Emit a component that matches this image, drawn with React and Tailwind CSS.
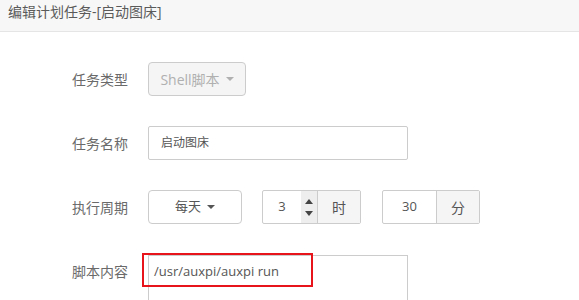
import React from 'react';

const font = { fontFamily: '"Open Sans", "Noto Sans CJK SC", sans-serif' };

const Caret = () => (
  <span className="inline-block ml-[6px] w-0 h-0 border-l-[4px] border-r-[4px] border-t-[4px] border-l-transparent border-r-transparent border-t-current align-middle" />
);

const Row = ({ label, children, className = '' }) => (
  <div className={`flex items-center ${className}`}>
    <label className="w-[148px] pr-[20px] text-right text-[14px] text-[#6a6a6a] shrink-0">{label}</label>
    {children}
  </div>
);

export default function App() {
  return (
    <div className="w-[579px] h-[300px] overflow-hidden bg-white" style={font}>
      <div className="h-[32px] bg-[#f7f7f7] border-b border-[#e5e5e5] pl-[8px] pt-[2px] text-[14px] leading-[20px] text-[#5a5a5a]">
        编辑计划任务-[启动图床]
      </div>

      <div className="pt-[30px]">
        <Row label="任务类型" className="mb-[30px]">
          <button
            disabled
            className="h-[34px] w-[98px] rounded-[4px] border border-[#ccc] bg-[#f5f5f5] text-[14px] text-[#b0b0b0] flex items-center justify-center"
          >
            Shell脚本
            <Caret />
          </button>
        </Row>

        <Row label="任务名称" className="mb-[30px]">
          <div className="h-[34px] w-[260px] border border-[#ccc] rounded-[2px] flex items-center px-[12px] text-[12px] text-[#555]">
            启动图床
          </div>
        </Row>

        <Row label="执行周期" className="mb-[31px]">
          <button className="h-[34px] w-[94px] rounded-[4px] border border-[#ccc] bg-white text-[13px] text-[#555] flex items-center justify-center">
            每天
            <Caret />
          </button>

          <div className="ml-[20px] flex h-[34px] border border-[#ccc] rounded-[2px]">
            <div className="w-[38px] flex items-center justify-center text-[13px] text-[#555]">3</div>
            <div className="w-[16px] bg-[#eee] flex flex-col items-center justify-center gap-[7px]">
              <span className="w-0 h-0 border-l-[4px] border-r-[4px] border-b-[5px] border-l-transparent border-r-transparent border-b-[#444]" />
              <span className="w-0 h-0 border-l-[4px] border-r-[4px] border-t-[5px] border-l-transparent border-r-transparent border-t-[#444]" />
            </div>
            <div className="w-[43px] border-l border-[#ccc] bg-[#f5f5f5] flex items-center justify-center text-[14px] text-[#555]">时</div>
          </div>

          <div className="ml-[21px] flex h-[34px] border border-[#ccc] rounded-[2px]">
            <div className="w-[53px] flex items-center justify-center text-[13px] text-[#555]">30</div>
            <div className="w-[43px] border-l border-[#ccc] bg-[#f5f5f5] flex items-center justify-center text-[14px] text-[#555]">分</div>
          </div>
        </Row>

        <div className="flex items-start">
          <label className="w-[148px] pr-[20px] text-right text-[14px] text-[#6a6a6a] shrink-0 pt-[6px]">脚本内容</label>
          <div className="relative">
            <div className="w-[260px] h-[80px] border border-[#ccc] pl-[5px] pt-[6px] text-[13px] text-[#555]">
              /usr/auxpi/auxpi run
            </div>
            <div className="absolute left-[-6px] top-[-2px] w-[171px] h-[34px] border-2 border-[#e8141c]" />
          </div>
        </div>
      </div>
    </div>
  );
}
